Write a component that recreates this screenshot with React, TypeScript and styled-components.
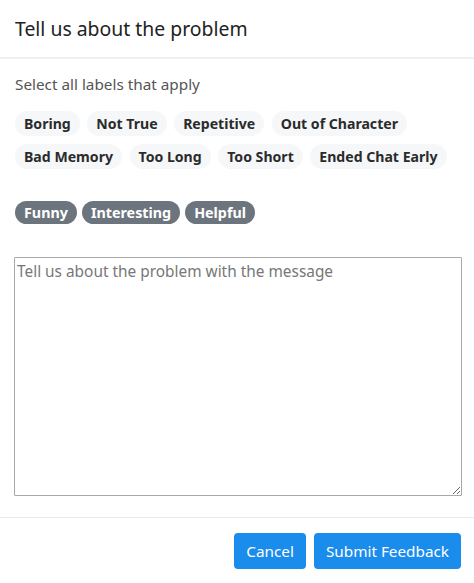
import styled, { createGlobalStyle } from "styled-components";

const GlobalStyle = createGlobalStyle`
  html, body {
    margin: 0;
    padding: 0;
    background: #ffffff;
  }
  body {
    font-family: "Noto Sans", "Open Sans", sans-serif;
    color: #212529;
  }
`;

const labels = [
  "Boring",
  "Not True",
  "Repetitive",
  "Out of Character",
  "Bad Memory",
  "Too Long",
  "Too Short",
  "Ended Chat Early",
];

const positives = ["Funny", "Interesting", "Helpful"];

export default function App() {
  return (
    <>
      <GlobalStyle />
      <Modal>
        <Header>
          <Title>Tell us about the problem</Title>
        </Header>
        <Body>
          <Hint>Select all labels that apply</Hint>
          <ChipList>
            {labels.map((label) => (
              <Chip key={label}>{label}</Chip>
            ))}
          </ChipList>
          <BadgeList>
            {positives.map((label) => (
              <Badge key={label}>{label}</Badge>
            ))}
          </BadgeList>
          <Message placeholder="Tell us about the problem with the message" />
        </Body>
        <Footer>
          <ActionButton type="button">Cancel</ActionButton>
          <ActionButton type="button">Submit Feedback</ActionButton>
        </Footer>
      </Modal>
    </>
  );
}

const Modal = styled.div`
  width: 474px;
  background: #ffffff;
  display: flex;
  flex-direction: column;
`;

const Header = styled.div`
  height: 57px;
  padding: 0 15px;
  display: flex;
  align-items: center;
  border-bottom: 2px solid #eef0f2;
`;

const Title = styled.h5`
  margin: 0;
  font-size: 19.4px;
  font-weight: 400;
  color: #222;
  line-height: 1.2;
`;

const Body = styled.div`
  padding: 14px 12px 21px 14px;
  display: flex;
  flex-direction: column;
`;

const Hint = styled.p`
  margin: 0 0 0 1px;
  font-size: 15.3px;
  line-height: 22px;
  color: #555;
`;

const ChipList = styled.div`
  display: flex;
  flex-wrap: wrap;
  gap: 8px 7.5px;
  margin-top: 16px;
  padding-left: 1px;
`;

const Chip = styled.span`
  display: inline-flex;
  align-items: center;
  height: 25px;
  padding: 0 9px;
  border-radius: 13px;
  background: #f5f7f9;
  font-size: 14.1px;
  font-weight: 700;
  color: #2b2b2b;
`;

const BadgeList = styled.div`
  display: flex;
  gap: 5px;
  margin-top: 32px;
  padding-left: 1px;
`;

const Badge = styled.span`
  display: inline-flex;
  align-items: center;
  height: 23px;
  padding: 0 9px;
  border-radius: 12px;
  background: #6c757d;
  font-size: 14.3px;
  font-weight: 700;
  color: #ffffff;
`;

const Message = styled.textarea`
  margin-top: 33px;
  width: 448px;
  height: 239px;
  box-sizing: border-box;
  padding: 2px 2px;
  border: 1px solid #a9a9a9;
  border-radius: 1px;
  font-family: "Noto Sans", "Open Sans", sans-serif;
  font-size: 15.4px;
  line-height: 23px;
  color: #333;
  resize: vertical;

  &::placeholder {
    color: #777;
  }
`;

const Footer = styled.div`
  display: flex;
  justify-content: flex-end;
  gap: 8px;
  padding: 15px 13px 14px;
  border-top: 1px solid #e9ecef;
`;

const ActionButton = styled.button`
  height: 36px;
  padding: 0 12px;
  border: none;
  border-radius: 4px;
  background: #1a8cec;
  color: #ffffff;
  font-family: "Noto Sans", "Open Sans", sans-serif;
  font-size: 15.3px;
  cursor: pointer;
`;
